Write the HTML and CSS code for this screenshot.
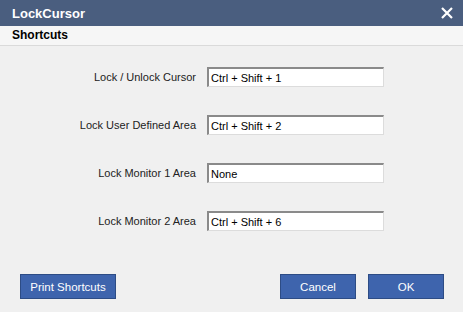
FILE: index.html
```html
<!DOCTYPE html>
<html lang="en">
<head>
    <meta charset="UTF-8">
    <title>LockCursor</title>
    <link rel="stylesheet" href="styles.css">
</head>
<body>
    <div class="window">
        <header class="titlebar">
            <span class="title">LockCursor</span>
            <span class="close">
                <svg width="12" height="12" viewBox="0 0 12 12"><path d="M1 1 L11 11 M11 1 L1 11" stroke="#fff" stroke-width="2.2"/></svg>
            </span>
        </header>
        <div class="section-bar">Shortcuts</div>
        <div class="form">
            <div class="row">
                <label>Lock / Unlock Cursor</label>
                <input type="text" value="Ctrl + Shift + 1">
            </div>
            <div class="row">
                <label>Lock User Defined Area</label>
                <input type="text" value="Ctrl + Shift + 2">
            </div>
            <div class="row">
                <label>Lock Monitor 1 Area</label>
                <input type="text" value="None">
            </div>
            <div class="row">
                <label>Lock Monitor 2 Area</label>
                <input type="text" value="Ctrl + Shift + 6">
            </div>
        </div>
        <div class="buttons">
            <button class="btn btn-wide">Print Shortcuts</button>
            <div class="spacer"></div>
            <button class="btn">Cancel</button>
            <button class="btn">OK</button>
        </div>
    </div>
</body>
</html>
```

FILE: styles.css
```css
body {
    margin: 0;
    padding: 0;
    font-family: "Liberation Sans", Arial, sans-serif;
    background-color: #f0f0f0;
}
.window {
    width: 463px;
    height: 312px;
    display: flex;
    flex-direction: column;
    background: #f0f0f0;
}
.titlebar {
    height: 26px;
    background: #4a5e7f;
    color: #fff;
    display: flex;
    align-items: center;
    justify-content: space-between;
    padding: 0 10px 0 12px;
}
.title {
    font-weight: bold;
    font-size: 13px;
}
.close {
    display: flex;
    align-items: center;
}
.section-bar {
    height: 19px;
    line-height: 19px;
    background: #f6f6f6;
    border-bottom: 1px solid #dadada;
    padding-left: 12px;
    font-weight: bold;
    font-size: 12px;
    color: #000;
}
.form {
    padding-top: 21px;
    display: flex;
    flex-direction: column;
    gap: 28px;
}
.row {
    display: flex;
    align-items: center;
}
.row label {
    width: 196px;
    text-align: right;
    font-size: 11px;
    color: #222;
}
.row input {
    margin-left: 11px;
    width: 170px;
    height: 15px;
    padding: 1px 2px;
    border-top: 2px solid #8a8a8a;
    border-left: 2px solid #8a8a8a;
    border-right: 1px solid #dcdcdc;
    border-bottom: 1px solid #dcdcdc;
    background: #fff;
    font-family: "Liberation Sans", Arial, sans-serif;
    font-size: 11px;
    color: #000;
    outline: none;
}
.buttons {
    margin-top: auto;
    margin-bottom: 13px;
    display: flex;
    padding: 0 19px 0 20px;
    gap: 12px;
}
.spacer {
    flex: 1;
}
.btn {
    width: 76px;
    height: 25px;
    background: #3e64ad;
    border: 1px solid #2d4c85;
    color: #fff;
    font-family: "Liberation Sans", Arial, sans-serif;
    font-size: 11.5px;
    padding: 0;
}
.btn-wide {
    width: 96px;
}
```
